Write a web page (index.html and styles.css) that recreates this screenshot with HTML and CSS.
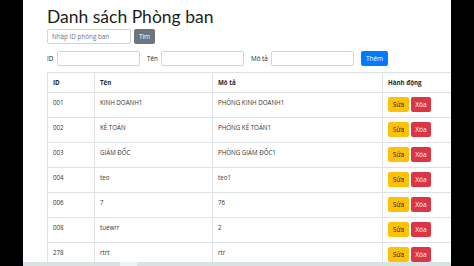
FILE: index.html
```html
<!DOCTYPE html>
<html lang="vi">
<head>
<meta charset="utf-8">
<title>Danh sách Phòng ban</title>
<link rel="stylesheet" href="styles.css">
</head>
<body>
<div class="screen">
  <div class="page">
    <h1 class="title">Danh sách Phòng ban</h1>
    <div class="search-row">
      <input class="field search-field" type="text" placeholder="Nhập ID phòng ban">
      <button class="btn btn-secondary">Tìm</button>
    </div>
    <div class="form-row">
      <label class="lbl lbl-id">ID</label>
      <input class="field" type="text">
      <label class="lbl lbl-ten">Tên</label>
      <input class="field" type="text">
      <label class="lbl lbl-mota">Mô tả</label>
      <input class="field" type="text">
      <button class="btn btn-primary btn-add">Thêm</button>
    </div>
    <table class="table">
      <thead>
        <tr>
          <th class="c-id">ID</th>
          <th class="c-ten">Tên</th>
          <th class="c-mota">Mô tả</th>
          <th class="c-act">Hành động</th>
        </tr>
      </thead>
      <tbody>
        <tr><td>001</td><td>KINH DOANH1</td><td>PHÒNG KINH DOANH1</td><td><button class="btn btn-warning">Sửa</button><button class="btn btn-danger">Xóa</button></td></tr>
        <tr><td>002</td><td>KẾ TOÁN</td><td>PHÒNG KẾ TOÁN1</td><td><button class="btn btn-warning">Sửa</button><button class="btn btn-danger">Xóa</button></td></tr>
        <tr><td>003</td><td>GIÁM ĐỐC</td><td>PHÒNG GIÁM ĐỐC1</td><td><button class="btn btn-warning">Sửa</button><button class="btn btn-danger">Xóa</button></td></tr>
        <tr><td>004</td><td>teo</td><td>teo1</td><td><button class="btn btn-warning">Sửa</button><button class="btn btn-danger">Xóa</button></td></tr>
        <tr><td>006</td><td>7</td><td>76</td><td><button class="btn btn-warning">Sửa</button><button class="btn btn-danger">Xóa</button></td></tr>
        <tr><td>008</td><td>tuewrr</td><td>2</td><td><button class="btn btn-warning">Sửa</button><button class="btn btn-danger">Xóa</button></td></tr>
        <tr><td>278</td><td>rtrt</td><td>rtr</td><td><button class="btn btn-warning">Sửa</button><button class="btn btn-danger">Xóa</button></td></tr>
      </tbody>
    </table>
  </div>
  <div class="hscroll"><div class="hscroll-thumb"></div></div>
</div>
</body>
</html>
```
FILE: styles.css
```css
html, body {
  margin: 0;
  padding: 0;
  background: #000;
  height: 100%;
}
body {
  font-family: "Open Sans", "Noto Sans", "DejaVu Sans", sans-serif;
  color: #212529;
}
.screen {
  position: relative;
  margin-left: 23px;
  width: 428px;
  height: 266px;
  background: #fff;
  overflow: hidden;
}
.page {
  padding: 6px 0 0 24px;
  width: 440px;
}
.title {
  margin: 0;
  font-family: Lato, "Open Sans", sans-serif;
  font-size: 17.5px;
  line-height: 22px;
  font-weight: 400;
  color: #1b1e21;
}
.search-row {
  display: flex;
  margin-top: 1px;
  height: 15px;
}
.form-row {
  display: flex;
  align-items: center;
  margin-top: 7px;
  height: 15px;
}
.field {
  box-sizing: border-box;
  width: 83px;
  height: 15px;
  border: 1px solid #ced4da;
  border-radius: 2px;
  padding: 0 4px;
  font-family: inherit;
  font-size: 6.3px;
  color: #495057;
  background: #fff;
  margin: 0;
}
.search-field {
  width: 84px;
}
.field::placeholder {
  color: #6c757d;
}
.lbl {
  font-size: 6.3px;
  line-height: 10px;
  color: #212529;
}
.lbl-id { width: 10px; }
.lbl-ten { width: 14px; margin-left: 7px; }
.lbl-mota { width: 20px; margin-left: 7px; }
.btn {
  box-sizing: border-box;
  height: 15px;
  border: 0;
  border-radius: 2px;
  padding: 0;
  margin: 0;
  font-family: inherit;
  font-size: 6.5px;
  line-height: 15px;
  text-align: center;
  cursor: pointer;
}
.btn-secondary {
  background: #6c757d;
  color: #fff;
  width: 21px;
  margin-left: 3px;
}
.btn-primary {
  background: #007bff;
  color: #fff;
  width: 27px;
}
.btn-add {
  margin-left: 7px;
}
.btn-warning {
  background: #ffc107;
  color: #212529;
  width: 21px;
}
.btn-danger {
  background: #dc3545;
  color: #fff;
  width: 20px;
  margin-left: 2px;
}
.table {
  margin-top: 6px;
  border-collapse: collapse;
  width: 423px;
  font-size: 6.2px;
  table-layout: fixed;
}
.table th, .table td {
  border: 1px solid #dee2e6;
  padding: 5px 5px 4px;
  text-align: left;
  vertical-align: top;
  line-height: 10px;
}
.table td {
  height: 15px;
  color: #333;
}
.table th {
  font-weight: 700;
  color: #212529;
  height: 10px;
}
.table td:last-child {
  padding-top: 4px;
  padding-bottom: 5px;
}
.c-id { width: 36px; }
.c-ten { width: 107px; }
.c-mota { width: 159px; }
.c-act { width: auto; }
.hscroll {
  position: absolute;
  left: 0;
  right: 0;
  bottom: 0;
  height: 4px;
  background: #d7e3e4;
}
.hscroll-thumb {
  position: absolute;
  left: 97px;
  width: 17px;
  top: 0;
  bottom: 0;
  background: #eef3f3;
}
```
